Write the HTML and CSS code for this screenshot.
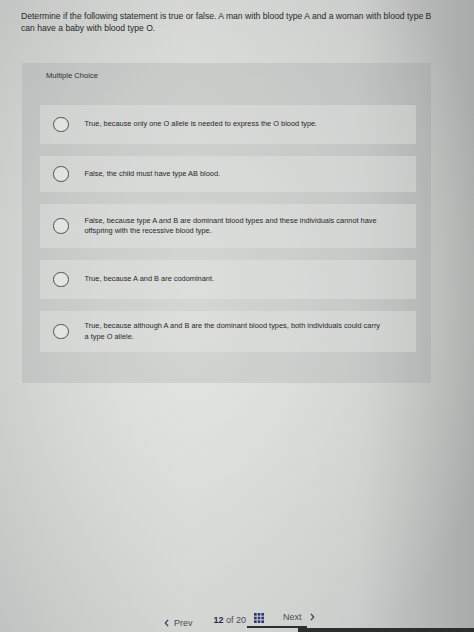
FILE: index.html
```html
<!DOCTYPE html>
<html>
<head>
<meta charset="utf-8">
<link rel="stylesheet" href="styles.css">
</head>
<body>
<div class="page">
  <p class="question">Determine if the following statement is true or false. A man with blood type A and a woman with blood type B can have a baby with blood type O.</p>
  <section class="panel">
    <div class="panel-title">Multiple Choice</div>
    <ul class="options">
      <li class="option o1"><span class="radio"></span><span class="label">True, because only one O allele is needed to express the O blood type.</span></li>
      <li class="option o2"><span class="radio"></span><span class="label">False, the child must have type AB blood.</span></li>
      <li class="option o3"><span class="radio"></span><span class="label">False, because type A and B are dominant blood types and these individuals cannot have offspring with the recessive blood type.</span></li>
      <li class="option o4"><span class="radio"></span><span class="label">True, because A and B are codominant.</span></li>
      <li class="option o5"><span class="radio"></span><span class="label">True, because although A and B are the dominant blood types, both individuals could carry a type O allele.</span></li>
    </ul>
  </section>
  <nav class="pager">
    <span class="prev"><svg class="chev" viewBox="0 0 6 10" width="5" height="8"><path d="M5 1 L1.5 5 L5 9" fill="none" stroke="#3c3f55" stroke-width="1.6"/></svg>Prev</span>
    <span class="count"><b>12</b> of 20</span>
    <svg class="grid" viewBox="0 0 9 9" width="10" height="10">
      <rect x="0" y="0" width="2.4" height="2.4"/><rect x="3.3" y="0" width="2.4" height="2.4"/><rect x="6.6" y="0" width="2.4" height="2.4"/>
      <rect x="0" y="3.3" width="2.4" height="2.4"/><rect x="3.3" y="3.3" width="2.4" height="2.4"/><rect x="6.6" y="3.3" width="2.4" height="2.4"/>
      <rect x="0" y="6.6" width="2.4" height="2.4"/><rect x="3.3" y="6.6" width="2.4" height="2.4"/><rect x="6.6" y="6.6" width="2.4" height="2.4"/>
    </svg>
    <span class="next">Next<svg class="chev" viewBox="0 0 6 10" width="5" height="8"><path d="M1 1 L4.5 5 L1 9" fill="none" stroke="#3c3f55" stroke-width="1.6"/></svg></span>
  </nav>
  <div class="underline"></div>
  <div class="edge"></div>
</div>
</body>
</html>
```
FILE: styles.css
```css
html, body {
  margin: 0;
  padding: 0;
}
body {
  width: 474px;
  height: 632px;
  overflow: hidden;
  font-family: "Liberation Sans", Arial, sans-serif;
  color: #262727;
  background:
    radial-gradient(ellipse 320px 420px at 190px 300px, rgba(232,234,230,0.9), rgba(232,234,230,0) 100%),
    linear-gradient(90deg, #c0c2c1 0%, #cfd1cf 40%, #c9cbca 75%, #a9abaa 100%);
}
.page {
  position: relative;
  height: 632px;
  display: flex;
  flex-direction: column;
}
.question {
  margin: 11px 0 0 21px;
  width: 412px;
  font-size: 8.6px;
  line-height: 11.5px;
  color: #262828;
}
.panel {
  margin: 29px 0 0 22px;
  width: 409px;
  height: 320px;
  box-sizing: border-box;
  padding: 8px 0 0 0;
  background: rgba(120,124,122,0.16);
}
.panel-title {
  margin-left: 24px;
  font-size: 7.6px;
  line-height: 9px;
  color: #2e2f2f;
}
.options {
  list-style: none;
  margin: 25px 0 0 18px;
  padding: 0;
  width: 376px;
  display: flex;
  flex-direction: column;
  gap: 12px;
}
.option {
  display: flex;
  align-items: center;
  background: rgba(235,237,234,0.35);
  box-sizing: border-box;
  padding: 0 20px 0 13px;
}
.o1 { height: 39px; }
.o2 { height: 36px; }
.o3 { height: 44px; }
.o4 { height: 39px; }
.o5 { height: 41px; }
.radio {
  flex: none;
  width: 13.5px;
  height: 13.5px;
  border: 1.3px solid #4e5150;
  border-radius: 50%;
  background: rgba(240,242,240,0.5);
}
.label {
  margin-left: 16px;
  width: 298px;
  font-size: 7.4px;
  line-height: 10.5px;
  color: #262828;
}
.pager {
  margin-top: auto;
  margin-bottom: 7px;
  margin-left: 164px;
  display: flex;
  align-items: center;
  font-size: 9px;
  color: #4a4c55;
}
.prev {
  display: flex;
  align-items: center;
  gap: 5px;
  position: relative;
  top: 3px;
}
.count {
  margin-left: 21px;
  color: #4a4c55;
}
.count b {
  color: #2a2d45;
}
.grid {
  margin-left: 8px;
  fill: #2e3478;
  position: relative;
  top: -2px;
}
.next {
  margin-left: 19px;
  display: flex;
  align-items: center;
  gap: 8px;
  position: relative;
  top: -3px;
}
.underline {
  position: absolute;
  left: 247px;
  top: 626px;
  width: 60px;
  height: 1.5px;
  background: #2c2e33;
}
.edge {
  position: absolute;
  right: 0;
  bottom: 0;
  width: 176px;
  height: 4px;
  background: #2c2e2e;
}
```
